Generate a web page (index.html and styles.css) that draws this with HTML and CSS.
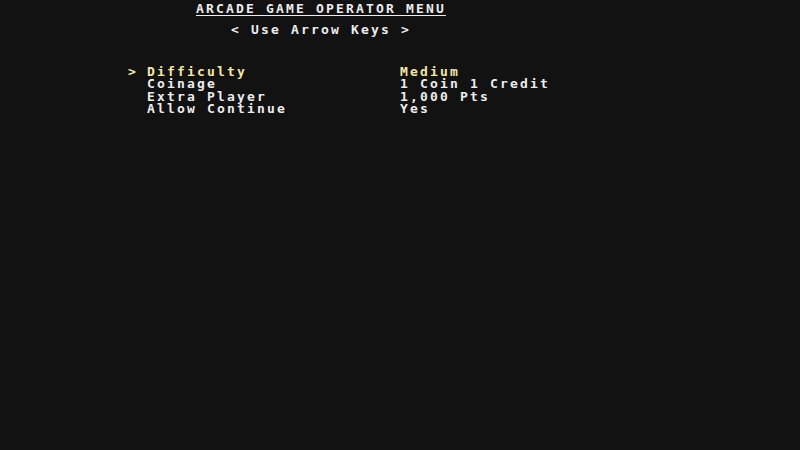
FILE: index.html
```html
<!DOCTYPE html>
<html lang="en">
<head>
  <meta charset="UTF-8">
  <meta name="viewport" content="width=device-width, initial-scale=1.0">
  <title>Operator Menu</title>
  <link rel="stylesheet" href="styles.css">
</head>
<body>

  <header class="menu-header">
    <h1>ARCADE GAME OPERATOR MENU</h1>
    <p>&lt; Use Arrow Keys &gt;</p>
  </header>

  <main class="menu">
    <div class="row active">
      <span class="cursor">&gt;</span>
      <span class="label">Difficulty</span>
      <span class="value">Medium</span>
    </div>
    <div class="row">
      <span class="cursor"></span>
      <span class="label">Coinage</span>
      <span class="value">1 Coin 1 Credit</span>
    </div>
    <div class="row">
      <span class="cursor"></span>
      <span class="label">Extra Player</span>
      <span class="value">1,000 Pts</span>
    </div>
    <div class="row">
      <span class="cursor"></span>
      <span class="label">Allow Continue</span>
      <span class="value">Yes</span>
    </div>
  </main>

</body>
</html>
```

FILE: styles.css
```css
* {
  margin: 0;
  padding: 0;
  box-sizing: border-box;
}

body {
  background-color: #121212;
  color: #ececec;
  font-family: "DejaVu Sans Mono", "Liberation Mono", monospace;
  font-weight: bold;
  font-size: 13px;
  letter-spacing: 2.17px;
  min-height: 100vh;
}

.menu-header {
  width: 642px;
  text-align: center;
}

.menu-header h1 {
  font-size: 13px;
  line-height: 18px;
  text-decoration: underline;
  text-underline-offset: 2px;
}

.menu-header p {
  line-height: 24px;
}

.menu {
  padding-left: 128px;
  padding-top: 24px;
}

.row {
  display: grid;
  grid-template-columns: 19px 253px auto;
  line-height: 12.4px;
}

.row.active {
  color: #f6e7a6; /* highlighted option */
}
```
